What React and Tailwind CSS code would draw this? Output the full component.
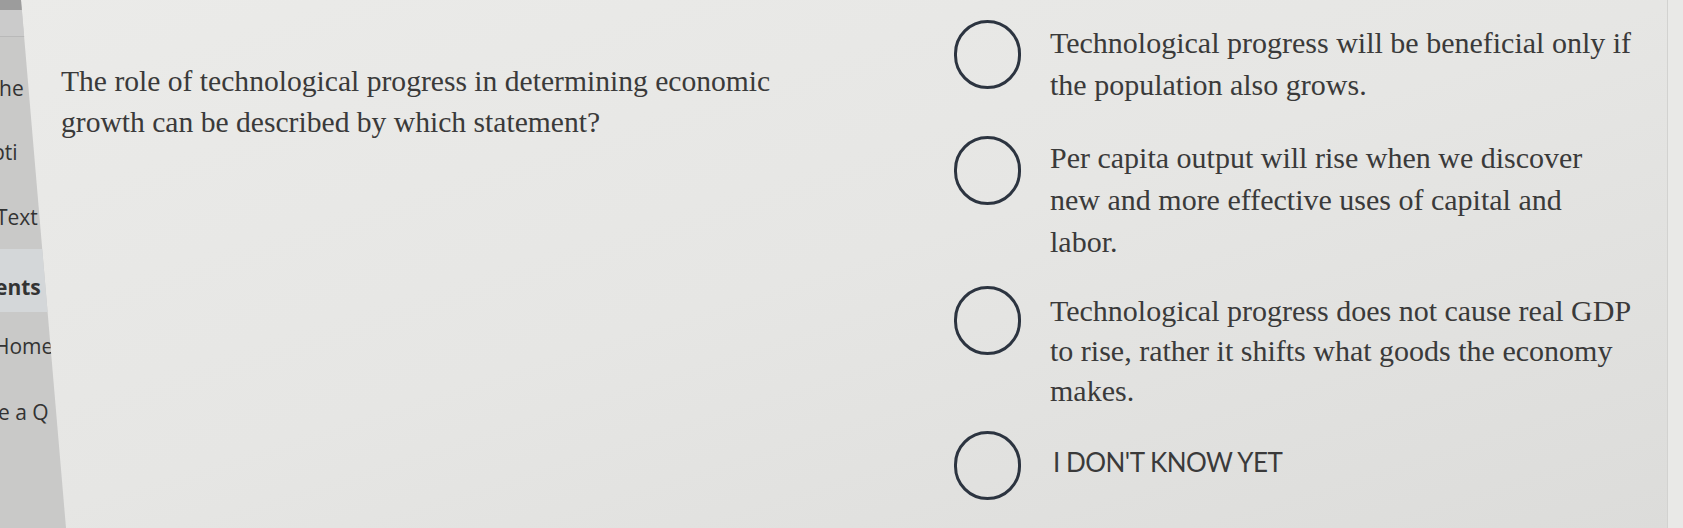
import React from 'react';

const sideItems = [
  { label: 'he', cls: 'h-[63px] -ml-[1px]' },
  { label: 'pti', cls: 'h-[65px] -ml-[8px]' },
  { label: 'Text', cls: 'h-[65px] -ml-[4px]' },
  { label: 'ents', cls: 'h-[63px] -ml-[5px] pt-[12px] font-bold bg-[#d4d7d9]' },
  { label: 'Home', cls: 'h-[67px] -ml-[6px]' },
  { label: 'e a Q', cls: 'h-[65px] -ml-[2px]' },
];

const options = [
  {
    lines: ['Technological progress will be beneficial only if', 'the population also grows.'],
    row: 'mt-[20px]',
    text: 'pt-[2px] leading-[42px]',
  },
  {
    lines: ['Per capita output will rise when we discover', 'new and more effective uses of capital and', 'labor.'],
    row: 'mt-[30px]',
    text: 'pt-[1px] leading-[42px]',
  },
  {
    lines: ['Technological progress does not cause real GDP', 'to rise, rather it shifts what goods the economy', 'makes.'],
    row: 'mt-[23px]',
    text: 'pt-[5px] leading-[40px]',
  },
];

const Radio = () => (
  <div className="w-[67px] h-[69px] shrink-0 rounded-full border-[3px] border-[#2c3440]" />
);

export default function App() {
  return (
    <div className="flex h-[528px] w-[1683px] overflow-hidden bg-linear-to-br from-[#ebebe9] via-[#e6e6e4] to-[#dcdcda] text-[#3a3a3a]">
      {/* sidebar, cut off by the photo's angle */}
      <aside className="w-[66px] shrink-0 bg-[#c9c9c8] [clip-path:polygon(0_0,21px_0,66px_100%,0_100%)] font-['Open_Sans','Liberation_Sans',sans-serif] text-[21px] text-[#333]">
        <div className="h-[10px] bg-[#9c9c9c]" />
        <div className="h-[27px] bg-[#cbcbcb] border-b border-[#b9b9b9]" />
        <div className="h-[19px]" />
        {sideItems.map((it) => (
          <div key={it.label} className={`flex items-center whitespace-nowrap leading-[24px] ${it.cls}`}>
            {it.label}
          </div>
        ))}
      </aside>

      {/* question */}
      <div className="w-[887px] shrink-0 -ml-[5px] pt-[61px] font-['Liberation_Serif','DejaVu_Serif',serif] text-[29.6px] leading-[41px]">
        <p className="whitespace-nowrap">The role of technological progress in determining economic</p>
        <p className="whitespace-nowrap">growth can be described by which statement?</p>
      </div>

      {/* options */}
      <div className="flex-1 flex flex-col pl-[6px]">
        {options.map((o, i) => (
          <div key={i} className={`flex items-start gap-[29px] ${o.row}`}>
            <Radio />
            <div className={`font-['Liberation_Serif','DejaVu_Serif',serif] text-[30px] ${o.text}`}>
              {o.lines.map((l) => (
                <div key={l} className="whitespace-nowrap">{l}</div>
              ))}
            </div>
          </div>
        ))}
        <div className="flex items-start gap-[32px] mt-[20px]">
          <Radio />
          <div className="pt-[17px] font-['Lato','Open_Sans',sans-serif] text-[26px] leading-[28px] tracking-[-0.5px]">
            I DON'T KNOW YET
          </div>
        </div>
      </div>

      <div className="w-[16px] shrink-0 border-l border-[#d2d2d0] bg-[#e9e9e7]" />
    </div>
  );
}
